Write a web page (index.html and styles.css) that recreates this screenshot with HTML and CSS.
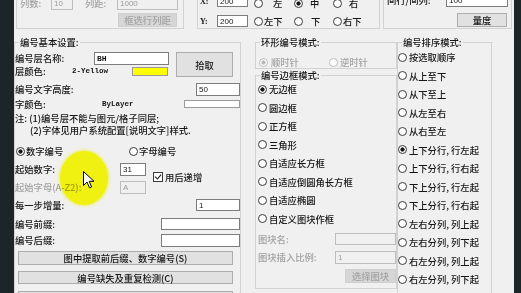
FILE: index.html
```html
<!DOCTYPE html>
<html lang="zh-CN">
<head>
<meta charset="utf-8">
<title>编号设置</title>
<link rel="stylesheet" href="styles.css">
</head>
<body>
<div class="screen">
  <div class="edge"></div>
  <div class="dialog">
    <div class="toprow">
      <div class="tgroup ga">
        <div class="row r13 ga-row">
          <span class="lbl dis ga-l1">列数:</span>
          <span class="inp inp-dis ga-i1">10</span>
          <span class="lbl dis ga-l2">列距:</span>
          <span class="inp inp-dis ga-i2">1000</span>
        </div>
        <div class="btn btn-dis ga-btn">框选行列距</div>
      </div>
      <div class="tgroup gb">
        <div class="xy">
          <div class="row r12 xy1"><span class="lbl xy-l">X:</span><span class="inp xy-i">200</span></div>
          <div class="row r12 xy2"><span class="lbl xy-l">Y:</span><span class="inp xy-i">200</span></div>
        </div>
        <div class="align-grid">
          <div class="radio"><i class="dot"></i><span class="gap10">左</span></div>
          <div class="radio"><i class="dot on"></i><span class="gap7">中</span></div>
          <div class="radio"><i class="dot"></i><span class="gap7">右</span></div>
          <div class="radio"><i class="dot"></i><span class="gap1">左下</span></div>
          <div class="radio"><i class="dot"></i><span class="gap8">下</span></div>
          <div class="radio"><i class="dot"></i><span class="gap1">右下</span></div>
        </div>
      </div>
      <div class="tgroup gc">
        <div class="row r13 gc-row">
          <span class="lbl gc-l">间行/间列:</span>
          <span class="inp gc-i">100</span>
        </div>
        <div class="btn gc-btn">量度</div>
      </div>
    </div>

    <div class="main">
      <fieldset class="group g1">
        <legend>编号基本设置:</legend>
        <div class="blk-a">
          <div class="blk-left">
            <div class="row r13">
              <span class="lbl l-name">编号层名称:</span>
              <span class="inp mono i-name">BH</span>
            </div>
            <div class="row r12">
              <span class="lbl l-color">层颜色:</span>
              <span class="mono t-color">2-Yellow</span>
              <span class="swatch yellow"></span>
            </div>
          </div>
          <div class="btn btn-pick">拾取</div>
        </div>
        <div class="row r13 m6">
          <span class="lbl grow">编号文字高度:</span>
          <span class="inp i-44">50</span>
        </div>
        <div class="row r12 m2">
          <span class="lbl l-tcolor">字颜色:</span>
          <span class="mono grow">ByLayer</span>
          <span class="swatch white"></span>
        </div>
        <div class="row r12 m2"><span class="lbl">注: (1)编号层不能与图元/格子同层;</span></div>
        <div class="row r12 note2"><span class="lbl">(2)字体见用户系统配置[说明文字]样式.</span></div>
        <div class="row r12 m9 kind">
          <div class="radio kind-1"><i class="dot on"></i><span class="gap1">数字编号</span></div>
          <div class="radio"><i class="dot"></i><span class="gap1">字母编号</span></div>
        </div>
        <div class="row r13 m6 start">
          <span class="lbl l-start">起始数字:</span>
          <span class="inp i-26">31</span>
          <span class="check-item"><i class="check"></i><span>用后递增</span></span>
        </div>
        <div class="row r13 m5">
          <span class="lbl dis l-start">起始字母(A-Z2):</span>
          <span class="inp inp-dis i-26">A</span>
        </div>
        <div class="row r12 m5">
          <span class="lbl grow">每一步增量:</span>
          <span class="inp i-44">1</span>
        </div>
        <div class="row r12 m7">
          <span class="lbl grow">编号前缀:</span>
          <span class="inp i-79"></span>
        </div>
        <div class="row r13 m4">
          <span class="lbl grow">编号后缀:</span>
          <span class="inp i-79"></span>
        </div>
        <div class="btn wide m4 h14">图中提取前后缀、数字编号(S)</div>
        <div class="btn wide m6 h13">编号缺失及重复检测(C)</div>
        <div class="btn wide m7 h14">编号结果输出到表格(E)</div>
      </fieldset>

      <div class="col2">
        <fieldset class="group g2a">
          <legend>环形编号模式:</legend>
          <div class="row r12 ring">
            <div class="radio ring-1 dis"><i class="dot on off"></i><span class="gap3">顺时针</span></div>
            <div class="radio dis"><i class="dot off"></i><span class="gap2">逆时针</span></div>
          </div>
        </fieldset>
        <fieldset class="group g2b">
          <legend>编号边框模式:</legend>
          <div class="rlist frames">
            <div class="radio rr"><i class="dot on"></i><span class="gap2">无边框</span></div>
            <div class="radio rr"><i class="dot"></i><span class="gap2">圆边框</span></div>
            <div class="radio rr"><i class="dot"></i><span class="gap2">正方框</span></div>
            <div class="radio rr"><i class="dot"></i><span class="gap2">三角形</span></div>
            <div class="radio rr"><i class="dot"></i><span class="gap2">自适应长方框</span></div>
            <div class="radio rr"><i class="dot"></i><span class="gap2">自适应倒圆角长方框</span></div>
            <div class="radio rr"><i class="dot"></i><span class="gap2">自适应椭圆</span></div>
            <div class="radio rr"><i class="dot"></i><span class="gap2">自定义图块作框</span></div>
          </div>
          <div class="row r12 m5 blk">
            <span class="lbl dis grow">图块名:</span>
            <span class="inp inp-dis i-61"></span>
          </div>
          <div class="row r13 m6 blk">
            <span class="lbl dis grow">图块插入比例:</span>
            <span class="inp inp-dis i-61">1</span>
          </div>
          <div class="btn btn-dis btn-blk">选择图块</div>
        </fieldset>
      </div>

      <fieldset class="group g3">
        <legend>编号排序模式:</legend>
        <div class="rlist order">
          <div class="radio rr"><i class="dot"></i><span class="gap2">按选取顺序</span></div>
          <div class="radio rr"><i class="dot"></i><span class="gap2">从上至下</span></div>
          <div class="radio rr"><i class="dot"></i><span class="gap2">从下至上</span></div>
          <div class="radio rr"><i class="dot"></i><span class="gap2">从左至右</span></div>
          <div class="radio rr"><i class="dot"></i><span class="gap2">从右至左</span></div>
          <div class="radio rr"><i class="dot on"></i><span class="gap2">上下分行, 行左起</span></div>
          <div class="radio rr"><i class="dot"></i><span class="gap2">上下分行, 行右起</span></div>
          <div class="radio rr"><i class="dot"></i><span class="gap2">下上分行, 行左起</span></div>
          <div class="radio rr"><i class="dot"></i><span class="gap2">下上分行, 行右起</span></div>
          <div class="radio rr"><i class="dot"></i><span class="gap2">左右分列, 列上起</span></div>
          <div class="radio rr"><i class="dot"></i><span class="gap2">左右分列, 列下起</span></div>
          <div class="radio rr"><i class="dot"></i><span class="gap2">右左分列, 列上起</span></div>
          <div class="radio rr"><i class="dot"></i><span class="gap2">右左分列, 列下起</span></div>
          <div class="radio rr"><i class="dot"></i><span class="gap2">逆时针环形编号</span></div>
        </div>
      </fieldset>
    </div>

    <div class="spot"></div>
    <svg class="cursor" width="12" height="18" viewBox="0 0 12 18">
      <path d="M0.5 0.5 L0.5 14.5 L4 11 L6.5 16.8 L8.6 15.9 L6.2 10.3 L11 10.3 Z" fill="#fff" stroke="#000" stroke-width="1" stroke-linejoin="round"/>
    </svg>
  </div>
  <div class="edge edge-r"></div>
</div>
</body>
</html>
```

FILE: styles.css
```css
html, body {
  margin: 0;
  padding: 0;
}

body {
  width: 521px;
  height: 293px;
  overflow: hidden;
  background: #1c2629;
  font-family: "Noto Sans CJK SC", "Noto Sans", sans-serif;
  font-size: 9.3px;
  font-weight: 500;
  color: #161616;
}

.screen {
  display: flex;
  height: 293px;
}

.edge {
  width: 14px;
  flex: none;
  background: #1c2629;
}

.edge-r {
  flex: 1;
  width: auto;
}

.dialog {
  width: 500px;
  flex: none;
  background: #f0f0f0;
  position: relative;
  overflow: hidden;
}

/* generic pieces */
.row {
  display: flex;
  align-items: center;
}

.r12 { height: 12px; }
.r13 { height: 13px; }
.h13 { height: 13px; }
.h14 { height: 14px; }
.m2 { margin-top: 2px; }
.m4 { margin-top: 4px; }
.m5 { margin-top: 5px; }
.m6 { margin-top: 6px; }
.m7 { margin-top: 7px; }
.m9 { margin-top: 9px; }
.grow { flex: 1; }

.lbl {
  white-space: nowrap;
  line-height: 11px;
}

.dis { color: #a2a2a2; }

.inp {
  box-sizing: border-box;
  align-self: stretch;
  border: 1px solid #7c7c7c;
  background: #fff;
  font-family: "Liberation Sans", sans-serif;
  font-size: 8px;
  font-weight: normal;
  padding-left: 2px;
  display: flex;
  align-items: center;
  flex: none;
}

.inp-dis {
  background: #f0f0f0;
  border-color: #bdbdbd;
  color: #9c9c9c;
}

.mono {
  font-family: "Liberation Mono", monospace;
  font-size: 7.5px;
  font-weight: bold;
  white-space: nowrap;
}

.btn {
  box-sizing: border-box;
  display: flex;
  align-items: center;
  justify-content: center;
  background: #e1e1e1;
  border: 1px solid #adadad;
  white-space: nowrap;
  flex: none;
}

.btn-dis {
  background: #d6d6d6;
  border-color: #cfcfcf;
  color: #a3a3a3;
}

.radio {
  display: flex;
  align-items: center;
  white-space: nowrap;
}

.dot {
  box-sizing: border-box;
  width: 9px;
  height: 9px;
  border-radius: 50%;
  border: 1px solid #3b3b3b;
  background: #fff;
  flex: none;
}

.dot.on {
  background: radial-gradient(circle, #151515 0 1.8px, #fff 2.4px);
}

.dot.off {
  border-color: #bcbcbc;
}

.dot.on.off {
  background: radial-gradient(circle, #b8b8b8 0 1.8px, #fff 2.4px);
}

.gap1 { margin-left: 1px; }
.gap2 { margin-left: 2px; }
.gap3 { margin-left: 3px; }
.gap7 { margin-left: 7px; }
.gap8 { margin-left: 8px; }
.gap10 { margin-left: 10px; }

/* top (cut off) groups */
.toprow {
  display: flex;
  margin-top: -10px;
  height: 39px;
}

.tgroup {
  box-sizing: border-box;
  height: 39px;
  border: 1px solid #d2d2d2;
  flex: none;
}

.ga {
  margin-left: 2px;
  width: 168px;
  padding: 6px 0 0 3px;
}

.ga-l1 { width: 31px; }
.ga-i1 { width: 22px; }
.ga-l2 { width: 32px; margin-left: 12px; }
.ga-i2 { width: 61px; }

.ga-btn {
  margin-top: 3px;
  margin-left: 98px;
  width: 59px;
  height: 14px;
}

.gb {
  margin-left: 13px;
  width: 183px;
  padding-left: 2px;
  display: flex;
}

.xy1 { margin-top: 4px; }
.xy2 { margin-top: 8px; }

.xy-l {
  width: 17px;
  font-family: "Liberation Serif", serif;
  font-weight: bold;
  font-size: 8px;
}

.xy-i { width: 31px; }

.align-grid {
  margin-left: 6px;
  margin-top: 6px;
  display: grid;
  grid-template-columns: 40px 39px 46px;
  grid-template-rows: 12px 12px;
  row-gap: 6px;
}

.gc {
  margin-left: 3px;
  width: 129px;
  padding-left: 3px;
}

.gc-row { margin-top: 3px; }
.gc-l { width: 59px; }
.gc-i { width: 62px; }

.gc-btn {
  margin-top: 6px;
  margin-left: 70px;
  width: 50px;
  height: 14px;
}

/* main groups */
.main {
  display: flex;
  align-items: flex-start;
  margin-top: 7px;
}

fieldset.group {
  margin: 0;
  padding: 0;
  border: 1px solid #d2d2d2;
  min-width: 0;
  box-sizing: border-box;
  flex: none;
}

legend {
  padding: 0 1px;
  margin-left: 4px;
  height: 12px;
  line-height: 12px;
  white-space: nowrap;
}

.g1 {
  margin-left: 2px;
  width: 227px;
  height: 280px;
  padding: 0 4px 0 2px;
}

.blk-a {
  display: flex;
  margin-top: 4px;
}

.blk-left {
  width: 154px;
  display: flex;
  flex-direction: column;
}

.l-name { width: 79px; }
.i-name { width: 75px; font-size: 8px; }
.l-color { width: 57px; }
.t-color { width: 60px; }

.swatch {
  box-sizing: border-box;
  border: 1px solid #9a9a9a;
  flex: none;
}

.yellow {
  width: 36px;
  height: 9px;
  background: #ffff00;
}

.white {
  width: 56px;
  height: 8px;
  background: #fff;
}

.btn-pick {
  margin-left: 7px;
  width: 57px;
  height: 25px;
}

.i-44 { width: 44px; }
.i-26 { width: 26px; }
.i-79 { width: 79px; }
.i-61 { width: 61px; }

.l-tcolor { width: 87px; }

.note2 { padding-left: 15px; }

.kind { padding-left: 1px; }
.kind-1 { width: 113px; }

.l-start { width: 105px; }

.check-item {
  display: flex;
  align-items: center;
  align-self: flex-start;
  margin-left: 7px;
  margin-top: 8px;
  margin-bottom: -6px;
  height: 11px;
}

.check {
  box-sizing: border-box;
  width: 10px;
  height: 10px;
  border: 1px solid #3b3b3b;
  background: #fff;
  position: relative;
  margin-right: 2px;
}

.check::after {
  content: "";
  position: absolute;
  left: 2px;
  top: 0px;
  width: 3px;
  height: 5px;
  border-right: 1.3px solid #111;
  border-bottom: 1.3px solid #111;
  transform: rotate(40deg);
}

.wide {
  margin-left: 3px;
  width: 215px;
}

.col2 {
  margin-left: 14px;
  width: 142px;
  flex: none;
}

.g2a {
  width: 142px;
  padding: 0 0 6px 1px;
}

.ring {
  margin-top: 8px;
  padding-left: 3px;
}

.ring-1 { width: 70px; }

.g2b {
  margin-top: 13px;
  width: 142px;
  height: 220px;
  padding: 0 3px 0 1px;
}

.rlist {
  display: flex;
  flex-direction: column;
}

.rr { height: 18.5px; }

.frames {
  margin-top: -1px;
  padding-left: 2px;
}

.blk .lbl { padding-left: 2px; }

.btn-blk {
  margin-top: 5px;
  margin-left: auto;
  width: 51px;
  height: 14px;
}

.g3 {
  margin-left: 17px;
  margin-top: -1px;
  width: 95px;
  height: 270px;
  padding: 0 0 0 2px;
}

.order { margin-top: 0; }

/* presentation overlay: cursor highlight */
.spot {
  position: absolute;
  left: 46px;
  top: 151px;
  width: 48px;
  height: 54px;
  border-radius: 50%;
  background: #ffff12;
  mix-blend-mode: multiply;
  box-shadow: 0 0 3px 1px rgba(255, 255, 18, 0.7);
}

.cursor {
  position: absolute;
  left: 69px;
  top: 171px;
}
```
